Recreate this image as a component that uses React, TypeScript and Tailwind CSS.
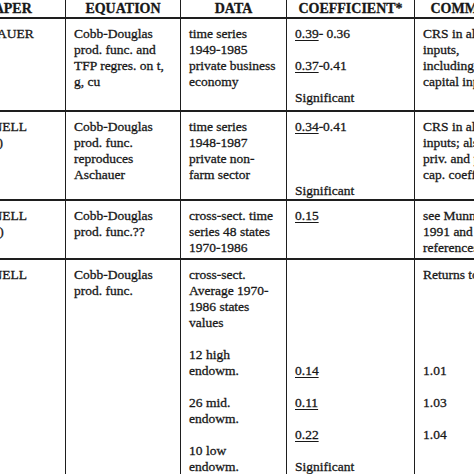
const serif = { fontFamily: '"Liberation Serif", "Times New Roman", serif' }

type Line = string | React.ReactNode | null

function Cell({ lines, last }: { lines: Line[]; last?: boolean }) {
  return (
    <div className={`${last ? "" : "border-r-[1.5px] border-[#1e1e1e]"} px-2 pt-[7px]`}>
      {lines.map((l, i) => (
        <div key={i} className="h-4 whitespace-nowrap leading-4">
          {l}
        </div>
      ))}
    </div>
  )
}

function U({ children }: { children: React.ReactNode }) {
  return <span className="underline decoration-1 underline-offset-2">{children}</span>
}

const cols = "grid grid-cols-[113px_115px_106px_128px_115px]"

export default function App() {
  return (
    <div
      className="h-[474px] w-[474px] overflow-hidden bg-white text-[13.5px] text-[#181818] [-webkit-text-stroke:0.3px_#181818]"
      style={serif}
    >
      <div className="-ml-[47px] w-[577px]">
        {/* header */}
        <div className={`${cols} h-[19px] border-b-2 border-[#1e1e1e] font-bold`}>
          {["PAPER", "EQUATION", "DATA", "COEFFICIENT*", "COMMENTS"].map((h, i) => (
            <div
              key={h}
              className={`${i < 4 ? "border-r-[1.5px] border-[#1e1e1e]" : ""} text-center text-[14px] leading-[17px]`}
            >
              {h}
            </div>
          ))}
        </div>

        {/* Aschauer */}
        <div className={`${cols} h-[93px] border-b-2 border-[#1e1e1e]`}>
          <Cell lines={["ASCHAUER", "(1989)"]} />
          <Cell lines={["Cobb-Douglas", "prod. func. and", "TFP regres. on t,", "g, cu"]} />
          <Cell lines={["time series", "1949-1985", "private business", "economy"]} />
          <Cell
            lines={[
              <><U>0.39</U>- 0.36</>,
              null,
              <><U>0.37</U>-0.41</>,
              null,
              "Significant",
            ]}
          />
          <Cell lines={["CRS in all", "inputs,", "including public", "capital inputs"]} last />
        </div>

        {/* Munnell a */}
        <div className={`${cols} h-[89px] border-b-2 border-[#1e1e1e]`}>
          <Cell lines={["MUNNELL", "(1990a)"]} />
          <Cell lines={["Cobb-Douglas", "prod. func.", "reproduces", "Aschauer"]} />
          <Cell lines={["time series", "1948-1987", "private non-", "farm sector"]} />
          <Cell lines={[<><U>0.34</U>-0.41</>, null, null, null, "Significant"]} />
          <Cell lines={["CRS in all", "inputs; also", "priv. and pub.", "cap. coeff."]} last />
        </div>

        {/* Munnell b */}
        <div className={`${cols} h-[59px] border-b-2 border-[#1e1e1e]`}>
          <Cell lines={["MUNNELL", "(1990b)"]} />
          <Cell lines={["Cobb-Douglas", "prod. func.??"]} />
          <Cell lines={["cross-sect. time", "series 48 states", "1970-1986"]} />
          <Cell lines={[<U>0.15</U>]} />
          <Cell lines={["see Munnell", "1991 and", "references"]} last />
        </div>

        {/* Munnell c */}
        <div className={`${cols} h-[230px]`}>
          <Cell lines={["MUNNELL"]} />
          <Cell lines={["Cobb-Douglas", "prod. func."]} />
          <Cell
            lines={[
              "cross-sect.",
              "Average 1970-",
              "1986 states",
              "values",
              null,
              "12 high",
              "endowm.",
              null,
              "26 mid.",
              "endowm.",
              null,
              "10 low",
              "endowm.",
            ]}
          />
          <Cell
            lines={[
              null,
              null,
              null,
              null,
              null,
              null,
              <U>0.14</U>,
              null,
              <U>0.11</U>,
              null,
              <U>0.22</U>,
              null,
              "Significant",
            ]}
          />
          <Cell
            lines={["Returns to scale", null, null, null, null, null, "1.01", null, "1.03", null, "1.04"]}
            last
          />
        </div>
      </div>
    </div>
  )
}
